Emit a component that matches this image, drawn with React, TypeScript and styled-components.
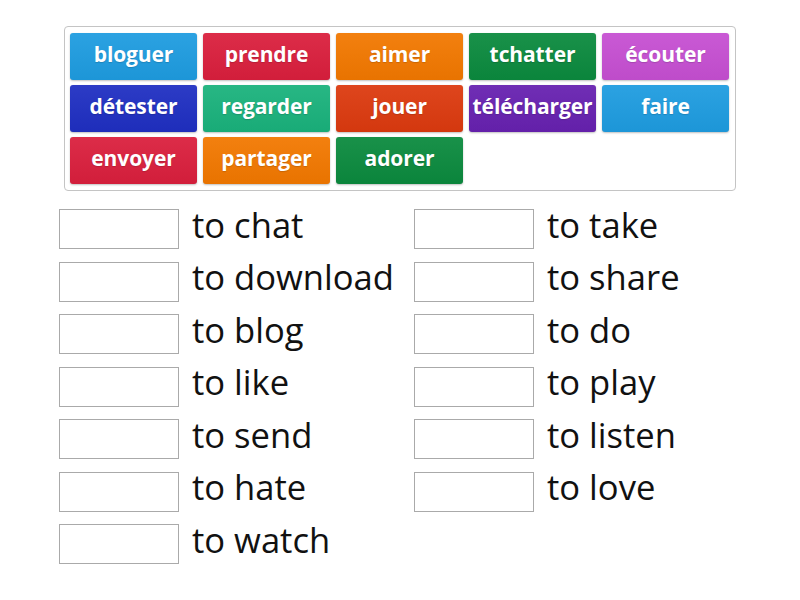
import React from 'react'
import styled, { createGlobalStyle } from 'styled-components'

const GlobalStyle = createGlobalStyle`
  html, body {
    margin: 0;
    padding: 0;
    background: #ffffff;
    font-family: 'Open Sans', 'Liberation Sans', sans-serif;
  }
`

type Tile = { label: string; color: string }

const tiles: Tile[] = [
  { label: 'bloguer', color: '#1e9ce0' },
  { label: 'prendre', color: '#da1f3d' },
  { label: 'aimer', color: '#f27800' },
  { label: 'tchatter', color: '#0b8a3e' },
  { label: 'écouter', color: '#c64fd2' },
  { label: 'détester', color: '#1f2fc2' },
  { label: 'regarder', color: '#1ab27c' },
  { label: 'jouer', color: '#dc3a0f' },
  { label: 'télécharger', color: '#6721b0' },
  { label: 'faire', color: '#1e9ce0' },
  { label: 'envoyer', color: '#da1f3d' },
  { label: 'partager', color: '#f27800' },
  { label: 'adorer', color: '#0b8a3e' },
]

const leftItems = ['to chat', 'to download', 'to blog', 'to like', 'to send', 'to hate', 'to watch']
const rightItems = ['to take', 'to share', 'to do', 'to play', 'to listen', 'to love']

const Page = styled.div`
  padding: 26px 0 0 59px;
  width: 800px;
  height: 600px;
  box-sizing: border-box;
`

const Bank = styled.div`
  margin-left: 5px;
  width: 672px;
  box-sizing: border-box;
  border: 1px solid #c4c4c4;
  border-radius: 4px;
  padding: 6px 5px 6px 5px;
  display: grid;
  grid-template-columns: repeat(5, 127px);
  grid-auto-rows: 47px;
  column-gap: 6px;
  row-gap: 5px;
`

const TileBox = styled.div<{ $color: string }>`
  background: ${({ $color }) => $color};
  background-image: linear-gradient(to bottom, rgba(255, 255, 255, 0.06), rgba(0, 0, 0, 0.04));
  border-radius: 3px;
  box-shadow: 0 1px 2px rgba(0, 0, 0, 0.25);
  color: #ffffff;
  font-weight: 700;
  font-size: 21px;
  line-height: 1;
  padding-bottom: 4px;
  box-sizing: border-box;
  display: flex;
  align-items: center;
  justify-content: center;
  white-space: nowrap;
  letter-spacing: -0.1px;
  text-shadow: 0 1px 1px rgba(0, 0, 0, 0.15);
`

const Columns = styled.div`
  margin-top: 18px;
  display: grid;
  grid-template-columns: 355px 300px;
  align-items: start;
`

const Column = styled.div`
  display: flex;
  flex-direction: column;
  gap: 12.5px;
`

const Row = styled.div`
  display: flex;
  align-items: center;
  gap: 13px;
  height: 40px;
`

const Slot = styled.div`
  width: 120px;
  height: 40px;
  box-sizing: border-box;
  border: 1px solid #aaaaaa;
  background: #ffffff;
  flex-shrink: 0;
`

const Clue = styled.span`
  font-size: 34.6px;
  color: #111111;
  line-height: 1;
  white-space: nowrap;
  position: relative;
  top: -4px;
`

const App: React.FC = () => (
  <>
    <GlobalStyle />
    <Page>
      <Bank>
        {tiles.map((t) => (
          <TileBox key={t.label} $color={t.color}>
            {t.label}
          </TileBox>
        ))}
      </Bank>
      <Columns>
        <Column>
          {leftItems.map((c) => (
            <Row key={c}>
              <Slot />
              <Clue>{c}</Clue>
            </Row>
          ))}
        </Column>
        <Column>
          {rightItems.map((c) => (
            <Row key={c}>
              <Slot />
              <Clue>{c}</Clue>
            </Row>
          ))}
        </Column>
      </Columns>
    </Page>
  </>
)

export default App
